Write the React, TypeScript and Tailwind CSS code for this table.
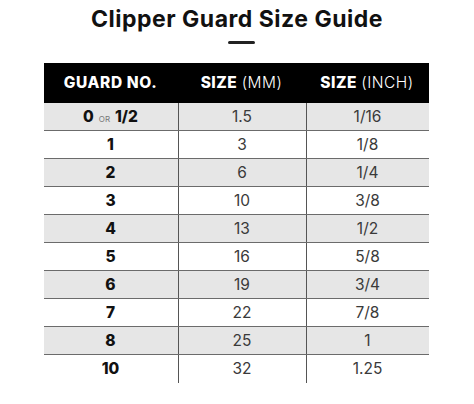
import React from "react";

const rows: [React.ReactNode, string, string][] = [
  [
    <span className="flex items-baseline gap-[5px]">
      <span>0</span>
      <span className="text-[8px] font-normal text-[#777]">OR</span>
      <span>1/2</span>
    </span>,
    "1.5",
    "1/16",
  ],
  ["1", "3", "1/8"],
  ["2", "6", "1/4"],
  ["3", "10", "3/8"],
  ["4", "13", "1/2"],
  ["5", "16", "5/8"],
  ["6", "19", "3/4"],
  ["7", "22", "7/8"],
  ["8", "25", "1"],
  ["10", "32", "1.25"],
];

export default function App() {
  return (
    <div
      className="w-[474px] h-[404px] bg-white flex flex-col items-center overflow-hidden"
      style={{ fontFamily: "Inter, 'Liberation Sans', sans-serif" }}
    >
      <h1 className="mt-[5px] text-[23px] leading-[28px] font-bold text-[#111] tracking-[0.5px]">
        Clipper Guard Size Guide
      </h1>
      <div className="mt-[8px] w-[27px] h-[3px] bg-[#222] rounded-full ml-[8px]" />
      <div className="mt-[19px] w-[385px] ml-[-2px]">
        <div className="grid grid-cols-[134px_128px_123px] h-[40px] bg-black text-white text-[15.5px] items-center">
          <div className="text-center font-extrabold tracking-[0.6px]">GUARD NO.</div>
          <div className="text-center">
            <span className="font-extrabold tracking-[0.5px]">SIZE</span>{" "}
            <span className="font-light tracking-[0.5px]">(MM)</span>
          </div>
          <div className="text-center">
            <span className="font-extrabold tracking-[0.5px]">SIZE</span>{" "}
            <span className="font-light tracking-[0.5px]">(INCH)</span>
          </div>
        </div>
        {rows.map((r, i) => (
          <div
            key={i}
            className={`grid grid-cols-[134px_128px_123px] h-[28px] ${
              i % 2 === 0 ? "bg-[#e6e6e6]" : "bg-white"
            } ${i < rows.length - 1 ? "border-b border-[#6b6b6b]" : ""}`}
          >
            <div className="flex items-center justify-center font-extrabold text-[15.5px] text-[#111]">
              {r[0]}
            </div>
            <div className="flex items-center justify-center border-l border-[#555] text-[15.5px] font-normal text-[#3a3a3a]">
              {r[1]}
            </div>
            <div className="flex items-center justify-center border-l border-[#555] text-[15.5px] font-normal text-[#3a3a3a]">
              {r[2]}
            </div>
          </div>
        ))}
      </div>
    </div>
  );
}
